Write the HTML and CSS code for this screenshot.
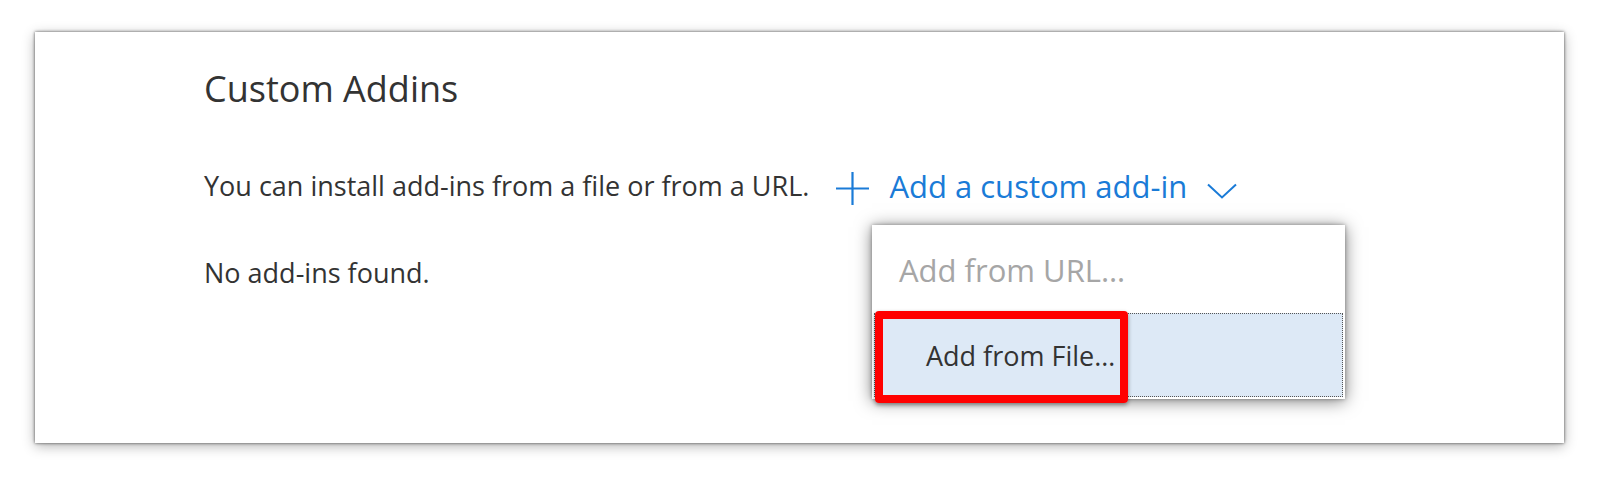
FILE: index.html
```html
<!DOCTYPE html>
<html lang="en">
<head>
    <meta charset="UTF-8">
    <meta name="viewport" content="width=device-width, initial-scale=1.0">
    <title>Custom Addins</title>
    <link rel="stylesheet" href="styles.css">
</head>
<body>
    <div class="panel">
        <h2 class="title">Custom Addins</h2>
        <div class="install-row">
            <span class="install-text">You can install add-ins from a file or from a URL.</span>
            <a class="add-link" href="#">
                <svg class="plus" width="33" height="33" viewBox="0 0 33 33"><path d="M16.5 0v33M0 16.5h33" stroke="#1a7bd7" stroke-width="2.2" fill="none"/></svg>
                <span>Add a custom add-in</span>
                <svg class="chevron" width="30" height="16" viewBox="0 0 30 16"><path d="M1 1.5l14 13 14-13" stroke="#1a7bd7" stroke-width="2" fill="none"/></svg>
            </a>
        </div>
        <p class="empty">No add-ins found.</p>

        <!-- dropdown -->
        <div class="dropdown">
            <div class="item item-url">Add from URL…</div>
            <div class="item item-file">Add from File…</div>
            <div class="highlight"></div>
        </div>
    </div>
</body>
</html>
```

FILE: styles.css
```css
*{padding:0; margin:0; box-sizing:border-box;}
a{text-decoration:none;}

html{
    font-family:"Open Sans", "Liberation Sans", sans-serif;
    color:#333;
    background:#fff;
}
body{
    min-height:481px;
    padding-top:32px;
}
.panel{
    position:relative;
    margin-left:35px;
    width:1529px;
    height:411px;
    padding:33px 0 0 169px;
    background:#fff;
    box-shadow:0 0 3px rgba(0,0,0,.65), 0 3px 12px rgba(0,0,0,.3);
}
.title{
    font-size:36px;
    font-weight:400;
    line-height:48px;
}
.install-row{
    display:flex;
    align-items:center;
    height:40px;
    margin-top:53px;
}
.install-text{
    font-size:27px;
    line-height:40px;
}
.add-link{
    display:flex;
    align-items:center;
    height:40px;
    margin-left:27px;
    color:#1a7bd7;
    font-size:31px;
    line-height:40px;
}
.add-link .plus{margin:4px 20px 0 0;}
.add-link .chevron{margin:10px 0 0 20px;}

.empty{
    margin-top:47px;
    font-size:27px;
    line-height:40px;
}

/* 드롭다운 메뉴 */
.dropdown{
    position:absolute;
    left:837px;
    top:193px;
    width:473px;
    height:174px;
    background:#fff;
    box-shadow:0 0 4px rgba(0,0,0,.35), 0 2px 16px rgba(0,0,0,.5);
}
.item-url{
    height:88px;
    padding:2px 0 0 27px;
    font-size:31px;
    line-height:86px;
    color:#a6a6a6;
}
.item-file{
    height:84px;
    margin:0 2px;
    padding:2px 0 0 51px;
    border:1px dotted #555;
    background:#dde9f6;
    font-size:27px;
    line-height:80px;
    color:#333;
}
.highlight{
    position:absolute;
    left:3px;
    top:86px;
    width:253px;
    height:92px;
    border:8px solid #f00;
    border-radius:4px;
    box-shadow:0 2px 4px rgba(0,0,0,.4);
}
```
